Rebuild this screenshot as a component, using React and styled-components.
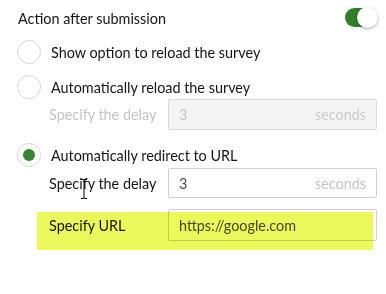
import React from 'react';
import styled, { createGlobalStyle } from 'styled-components';

const GlobalStyle = createGlobalStyle`
  body {
    margin: 0;
    background: #ffffff;
    font-family: 'Lato', 'Liberation Sans', sans-serif;
  }
`;

const Page = styled.div`
  position: relative;
  width: 386px;
  height: 294px;
  box-sizing: border-box;
  padding: 0 9px 0 17px;
  display: flex;
  flex-direction: column;
`;

const Header = styled.div`
  height: 36px;
  display: flex;
  align-items: center;
  justify-content: space-between;
  padding-left: 1px;
`;

const Title = styled.div`
  font-size: 14.4px;
  color: #151515;
`;

const Toggle = styled.div`
  position: relative;
  width: 32px;
  height: 19px;
  border-radius: 10px;
  background: #2f7f2b;
  margin-bottom: 1px;
`;

const Knob = styled.div`
  position: absolute;
  right: -1px;
  top: -1px;
  width: 21px;
  height: 21px;
  border-radius: 50%;
  background: #ffffff;
  box-shadow: 0 1px 3px rgba(0, 0, 0, 0.35);
`;

const RadioRow = styled.div`
  display: flex;
  align-items: center;
  gap: 10px;
  height: 24px;
  margin-top: ${(props) => props.mt}px;
`;

const Circle = styled.div`
  width: 22px;
  height: 22px;
  border-radius: 50%;
  border: 1px solid #d6d6d6;
  display: flex;
  align-items: center;
  justify-content: center;
  flex-shrink: 0;
`;

const Dot = styled.div`
  width: 12px;
  height: 12px;
  border-radius: 50%;
  background: #35862e;
`;

const RadioLabel = styled.span`
  font-size: 14.4px;
  color: #151515;
`;

const FieldRow = styled.div`
  position: relative;
  display: flex;
  align-items: center;
  padding-left: 32px;
  height: ${(props) => props.h}px;
  margin-top: ${(props) => props.mt}px;
`;

const FieldLabel = styled.span`
  width: 119px;
  flex-shrink: 0;
  font-size: 14.4px;
  color: ${(props) => (props.disabled ? '#c4c4c4' : '#151515')};
`;

const InputBox = styled.div`
  flex: 1;
  height: 100%;
  box-sizing: border-box;
  display: flex;
  align-items: center;
  justify-content: space-between;
  padding: 0 10px 0 10px;
  border: 1px solid ${(props) => (props.disabled ? '#dcdcdc' : '#cfcfcf')};
  border-radius: 2px;
  background: ${(props) => (props.disabled ? '#f4f4f4' : '#ffffff')};
  font-size: 14.4px;
`;

const InputValue = styled.span`
  color: ${(props) => (props.disabled ? '#c4c4c4' : '#4a4a4a')};
`;

const Suffix = styled.span`
  color: ${(props) => (props.disabled ? '#cacaca' : '#c4c4c4')};
`;

const Highlight = styled.div`
  position: absolute;
  left: 20px;
  top: 3px;
  width: 336px;
  height: 38px;
  background: #ecf95a;
  mix-blend-mode: multiply;
  pointer-events: none;
`;

const Cursor = styled.svg`
  position: absolute;
  left: 62px;
  top: 10px;
`;

const DelayField = ({ disabled, h, mt, cursor }) => (
  <FieldRow h={h} mt={mt}>
    <FieldLabel disabled={disabled}>Specify the delay</FieldLabel>
    <InputBox disabled={disabled}>
      <InputValue disabled={disabled}>3</InputValue>
      <Suffix disabled={disabled}>seconds</Suffix>
    </InputBox>
    {cursor && (
      <Cursor width="10" height="22" viewBox="0 0 10 22">
        <path d="M2 1.5h2.5l0.5 0.5 0.5-0.5H8M5 2v18M2 20.5h2.5l0.5-0.5 0.5 0.5H8" stroke="#000" strokeWidth="1" fill="none" />
      </Cursor>
    )}
  </FieldRow>
);

const App = () => (
  <>
    <GlobalStyle />
    <Page>
      <Header>
        <Title>Action after submission</Title>
        <Toggle>
          <Knob />
        </Toggle>
      </Header>
      <RadioRow mt={4}>
        <Circle />
        <RadioLabel>Show option to reload the survey</RadioLabel>
      </RadioRow>
      <RadioRow mt={11}>
        <Circle />
        <RadioLabel>Automatically reload the survey</RadioLabel>
      </RadioRow>
      <DelayField disabled h={31} mt={0} />
      <RadioRow mt={13}>
        <Circle>
          <Dot />
        </Circle>
        <RadioLabel>Automatically redirect to URL</RadioLabel>
      </RadioRow>
      <DelayField h={30} mt={1} cursor />
      <FieldRow h={32} mt={11}>
        <FieldLabel>Specify URL</FieldLabel>
        <InputBox>
          <InputValue>https://google.com</InputValue>
        </InputBox>
        <Highlight />
      </FieldRow>
    </Page>
  </>
);

export default App;
